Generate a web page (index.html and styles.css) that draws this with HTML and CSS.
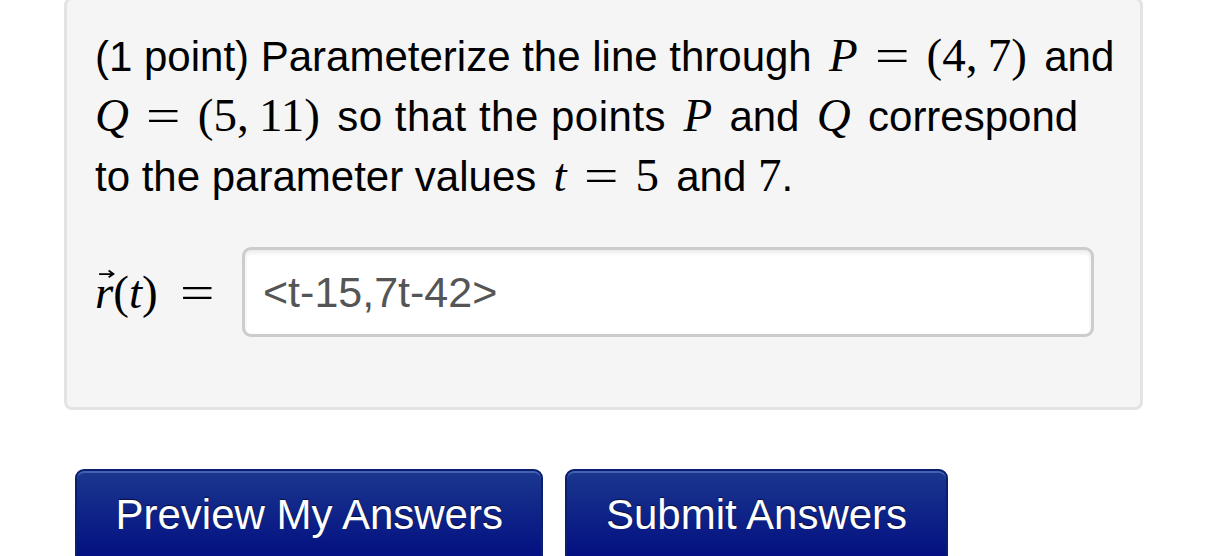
FILE: index.html
```html
<!DOCTYPE html>
<html>
<head>
<meta charset="utf-8">
<link rel="stylesheet" href="styles.css">
</head>
<body>
<div class="page">
  <div class="panel">
    <p class="problem">(1 point) Parameterize the line through <span class="m"><i>P</i><span class="rel">=</span>(4,<span class="thin"></span>7)</span> and<br><span class="m first"><i>Q</i><span class="rel">=</span>(5,<span class="thin"></span>11)</span> <span class="wide">so that the points</span> <span class="m"><i>P</i></span> and <span class="m"><i>Q</i></span> correspond<br>to the parameter values <span class="m"><i>t</i><span class="rel">=</span>5</span> and <span class="m num">7</span>.</p>
    <div class="answer-row">
      <span class="m lhs"><span class="vec"><i>r</i><svg class="arrow" viewBox="0 0 16 8" width="17" height="9"><path d="M1 4.5 H14 M10 1.2 L14.5 4.5 L10 7.5" fill="none" stroke="#000" stroke-width="1.7"/></svg></span>(<i>t</i>)<span class="rel">=</span></span>
      <div class="input">&lt;t-15,7t-42&gt;</div>
    </div>
  </div>
  <div class="buttons">
    <button class="btn">Preview My Answers</button>
    <button class="btn">Submit Answers</button>
  </div>
</div>
</body>
</html>
```
FILE: styles.css
```css
html, body {
  margin: 0;
  padding: 0;
  background: #fff;
  overflow: hidden;
}
.page {
  padding-left: 64px;
  width: 1079px;
}
.panel {
  margin-top: -3px;
  background: #f5f5f5;
  border: 3px solid #e3e3e3;
  border-radius: 8px;
  padding: 27px 28px 70px 28px;
}
.problem {
  margin: 0;
  font-family: "Liberation Sans", Arial, sans-serif;
  font-size: 42px;
  line-height: 60px;
  color: #000;
  white-space: nowrap;
}
.wide {
  letter-spacing: 0.5px;
}
.m {
  font-family: "Liberation Serif", "Times New Roman", serif;
  font-size: 47px;
  line-height: 0;
  padding: 0 0.12em;
}
.m.first {
  padding-left: 0;
}
.m.num {
  padding: 0;
}
.m i {
  font-style: italic;
}
.rel {
  display: inline-block;
  margin: 0 0.45em;
  transform: scaleX(1.3);
}
.thin {
  display: inline-block;
  width: 0.22em;
}
.answer-row {
  margin-top: 40px;
  display: flex;
  align-items: center;
}
.lhs {
  line-height: 1;
  width: 147px;
  padding: 0;
  white-space: nowrap;
}
.lhs .rel {
  margin-left: 0.55em;
}
.vec {
  position: relative;
  display: inline-block;
}
.arrow {
  position: absolute;
  left: 3px;
  top: 0;
}
.input {
  box-sizing: border-box;
  width: 852px;
  height: 90px;
  background: #fff;
  border: 3px solid #cccccc;
  border-radius: 9px;
  box-shadow: inset 0 3px 4px rgba(0,0,0,0.08);
  padding-left: 18px;
  display: flex;
  align-items: center;
  font-family: "Liberation Sans", Arial, sans-serif;
  font-size: 43px;
  color: #555;
}
.buttons {
  margin-top: 59px;
  padding-left: 11px;
  display: flex;
  gap: 22px;
}
.btn {
  height: 100px;
  padding: 0 38.5px 8px;
  border: 2px solid #0a1f70;
  border-radius: 9px;
  background: linear-gradient(#1a378e, #010b80);
  box-shadow: inset 0 2px 0 rgba(120,150,220,0.45);
  color: #fff;
  font-family: "Liberation Sans", Arial, sans-serif;
  font-size: 42px;
  text-shadow: 0 -1px 1px rgba(0,0,0,0.6);
  cursor: pointer;
}
```
